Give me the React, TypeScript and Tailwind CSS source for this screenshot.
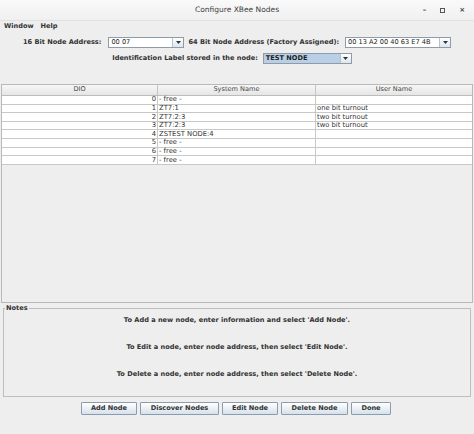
import { ChevronDown } from "lucide-react";

const rows = [
  { dio: "0", sys: "- free -", user: "" },
  { dio: "1", sys: "ZT7:1", user: "one bit turnout" },
  { dio: "2", sys: "ZT7:2:3", user: "two bit turnout" },
  { dio: "3", sys: "ZT7:2:3", user: "two bit turnout" },
  { dio: "4", sys: "ZSTEST NODE:4", user: "" },
  { dio: "5", sys: "- free -", user: "" },
  { dio: "6", sys: "- free -", user: "" },
  { dio: "7", sys: "- free -", user: "" },
];

const notes = [
  "To Add a new node, enter information and select 'Add Node'.",
  "To Edit a node, enter node address, then select 'Edit Node'.",
  "To Delete a node, enter node address, then select 'Delete Node'.",
];

function Arrow() {
  return (
    <div className="w-[11px] h-full flex items-center justify-center bg-gradient-to-b from-[#ffffff] to-[#dde6ef] border-l border-[#b8c2cc]">
      <svg width="5" height="3" viewBox="0 0 5 3">
        <path d="M0 0 L5 0 L2.5 3 Z" fill="#333" />
      </svg>
    </div>
  );
}

function Combo({ value, width, selected }: { value: string; width: string; selected?: boolean }) {
  return (
    <div className={`${width} h-[11px] flex border border-[#8f9ba6] ${selected ? "bg-[#b8cfe5]" : "bg-white"}`}>
      <div className={`flex-1 flex items-center pl-[2px] text-[6.6px] text-[#222] ${selected ? "font-bold" : ""}`}>{value}</div>
      <Arrow />
    </div>
  );
}

function Btn({ label, width }: { label: string; width: string }) {
  return (
    <button className={`${width} h-[13px] flex items-center justify-center border border-[#8c9cab] rounded-[1px] bg-gradient-to-b from-[#ffffff] to-[#d6e1ec] text-[6.6px] font-bold text-[#333]`}>
      {label}
    </button>
  );
}

export default function App() {
  return (
    <div className="w-[474px] h-[434px] bg-[#eeeeee] flex flex-col overflow-hidden font-['DejaVu_Sans',sans-serif] text-[#333]">
      {/* Title bar */}
      <div className="h-[21px] flex items-center bg-gradient-to-b from-[#fafafa] to-[#f0f0f0] border-b border-[#e2e2e2]">
        <div className="w-[80px]" />
        <div className="flex-1 text-center text-[7.5px] text-[#3a3d3e] pl-[0px]">Configure XBee Nodes</div>
        <div className="w-[80px] flex items-center justify-end gap-[14px] pr-[9px] text-[7px] text-[#444]">
          <span className="font-bold">–</span>
          <span className="w-[5px] h-[5px] border border-[#555]" />
          <span className="font-bold">×</span>
        </div>
      </div>

      {/* Menu bar */}
      <div className="h-[12px] flex items-center gap-[7px] pl-[4px] text-[6.6px] font-bold text-[#333]">
        <span>Window</span>
        <span>Help</span>
      </div>

      {/* Addresses */}
      <div className="flex items-center justify-center gap-[4px] mt-[4px] h-[11px] pl-[0px]">
        <span className="text-[6.6px] font-bold pr-[3px]">16 Bit Node Address:</span>
        <Combo value="00 07" width="w-[76px]" />
        <span className="text-[6.6px] font-bold pl-[0px] pr-[2px]">64 Bit Node Address (Factory Assigned):</span>
        <Combo value="00 13 A2 00 40 63 E7 4B" width="w-[106px]" />
      </div>
      <div className="flex items-center justify-center gap-[5px] mt-[5px] h-[11px] pr-[10px]">
        <span className="text-[6.6px] font-bold">Identification Label stored in the node:</span>
        <Combo value="TEST NODE" width="w-[89px]" selected />
      </div>

      {/* Table */}
      <div className="mt-[20px] mx-[1px] h-[219px] border border-[#b9b9b9] bg-[#eeeeee] flex flex-col">
        <div className="h-[11px] flex bg-gradient-to-b from-[#f6f6f6] to-[#e6e6e6] border-b border-[#bcbcbc] text-[6.6px] text-[#444]">
          <div className="w-[156px] flex items-center justify-center border-r border-[#c4c4c4]">DIO</div>
          <div className="w-[158px] flex items-center justify-center border-r border-[#c4c4c4]">System Name</div>
          <div className="flex-1 flex items-center justify-center">User Name</div>
        </div>
        <div className="bg-white">
          {rows.map((r) => (
            <div key={r.dio} className="h-[8.6px] flex border-b border-[#c8c8c8] text-[6.8px] text-[#333] leading-none">
              <div className="w-[156px] flex items-center justify-end pr-[1px] border-r border-[#c8c8c8]">{r.dio}</div>
              <div className="w-[158px] flex items-center pl-[1px] border-r border-[#c8c8c8]">{r.sys}</div>
              <div className="flex-1 flex items-center pl-[1px]">{r.user}</div>
            </div>
          ))}
        </div>
      </div>

      {/* Notes */}
      <fieldset className="mx-[3px] mt-[1px] h-[93px] border border-[#bdbdbd] px-[2px] pb-[2px]">
        <legend className="text-[6.6px] font-bold text-[#333] px-[1px] ml-[-1px] leading-[8px]">Notes</legend>
        <div className="flex flex-col items-center gap-[18px] pt-[4px] text-[6.6px] font-bold text-[#333]">
          {notes.map((n) => (
            <div key={n} className="leading-[9px]">{n}</div>
          ))}
        </div>
      </fieldset>

      {/* Buttons */}
      <div className="flex justify-center gap-[3px] mt-[5px] pr-[2px]">
        <Btn label="Add Node" width="w-[56px]" />
        <Btn label="Discover Nodes" width="w-[79px]" />
        <Btn label="Edit Node" width="w-[56px]" />
        <Btn label="Delete Node" width="w-[67px]" />
        <Btn label="Done" width="w-[40px]" />
      </div>
    </div>
  );
}
